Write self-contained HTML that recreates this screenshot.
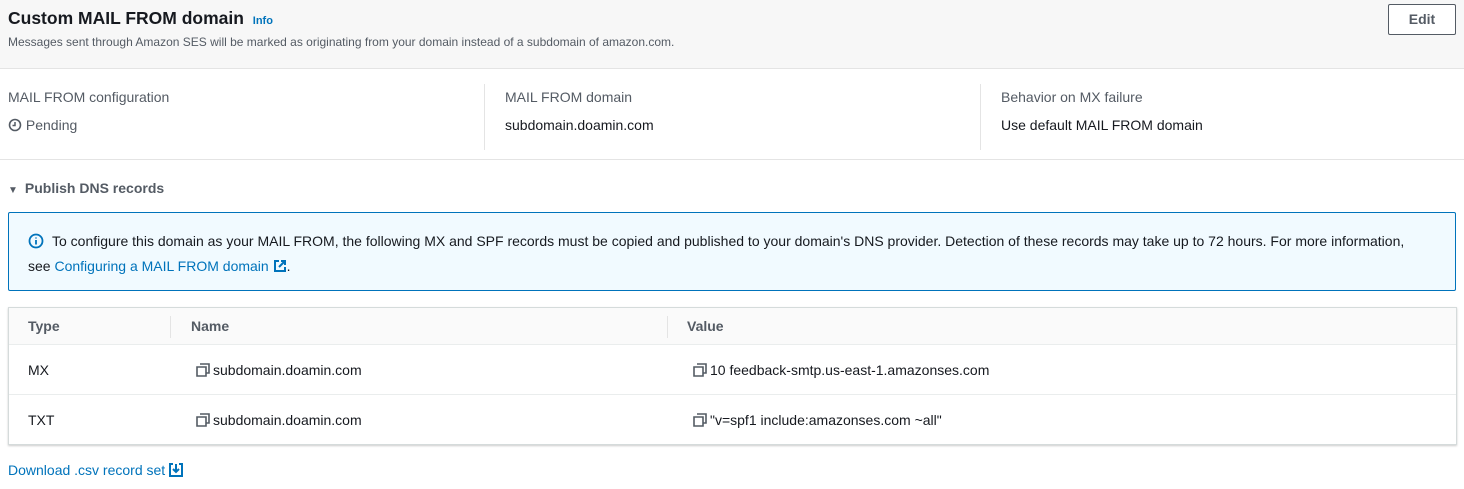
<!DOCTYPE html>
<html><head><style>
*{margin:0;padding:0;box-sizing:border-box}
body{width:1464px;height:489px;background:#fff;font-family:"Liberation Sans",Arial,sans-serif;color:#16191f;position:relative;overflow:hidden;font-size:14px}
.a{position:absolute;white-space:nowrap}
.hdr{position:absolute;left:0;top:0;width:1464px;height:69px;background:#f7f7f7;border-bottom:1px solid #e4e4e4}
.lbl{color:#545b64;font-size:14px}
.link{color:#0073bb}
.vd{position:absolute;width:1px;background:#e4e4e4}
</style></head><body>
<div class="hdr"></div>
<div class="a" style="left:8px;top:8px;font-size:17.5px;font-weight:bold">Custom MAIL FROM domain <span style="color:#0073bb;font-size:11px;margin-left:4px">Info</span></div>
<div class="a" style="left:8px;top:35px;font-size:12px;color:#545b64">Messages sent through Amazon SES will be marked as originating from your domain instead of a subdomain of amazon.com.</div>
<div class="a" style="left:1388px;top:4px;width:68px;height:31px;border:1px solid #545b64;border-radius:2px;background:#fff;font-weight:bold;color:#545b64;text-align:center;line-height:29px;font-size:14px">Edit</div>

<div class="a lbl" style="left:8px;top:89px">MAIL FROM configuration</div>
<div class="a lbl" style="left:8px;top:117px"><svg width="14" height="14" viewBox="0 0 14 14" style="vertical-align:-2px"><circle cx="7" cy="7" r="5.5" fill="none" stroke="#545b64" stroke-width="1.6"/><path d="M7 4v3.5H4.5" fill="none" stroke="#545b64" stroke-width="1.5"/></svg> Pending</div>
<div class="vd" style="left:484px;top:84px;height:66px"></div>
<div class="a lbl" style="left:505px;top:89px">MAIL FROM domain</div>
<div class="a" style="left:505px;top:117px">subdomain.doamin.com</div>
<div class="vd" style="left:980px;top:84px;height:66px"></div>
<div class="a lbl" style="left:1001px;top:89px">Behavior on MX failure</div>
<div class="a" style="left:1001px;top:117px">Use default MAIL FROM domain</div>
<div class="a" style="left:0;top:159px;width:1464px;height:1px;background:#e4e4e4"></div>

<div class="a" style="left:8px;top:180px;font-weight:bold;color:#545b64;font-size:14px"><span style="font-size:10px;margin-right:7px">▼</span>Publish DNS records</div>

<div class="a" style="left:8px;top:212px;width:1448px;height:79px;background:#f1faff;border:1px solid #0073bb;border-radius:2px"></div>
<div class="a" style="left:28px;top:229px;font-size:14px;line-height:25px;white-space:normal;width:1420px"><svg width="16" height="16" viewBox="0 0 16 16" style="vertical-align:-3px;margin-right:8px"><circle cx="8" cy="8" r="6.5" fill="none" stroke="#0073bb" stroke-width="1.8"/><path d="M8 7v4.5M8 4.5v1" stroke="#0073bb" stroke-width="1.8"/></svg>To configure this domain as your MAIL FROM, the following MX and SPF records must be copied and published to your domain's DNS provider. Detection of these records may take up to 72 hours. For more information,<br>see <span class="link">Configuring a MAIL FROM domain <svg width="14" height="14" viewBox="0 0 14 14" style="vertical-align:-2px"><path d="M6 2H2v10h10V8M8 2h4v4M12 2L6 8" fill="none" stroke="#0073bb" stroke-width="2"/></svg></span>.</div>

<div class="a" style="left:8px;top:307px;width:1449px;height:138px;border:1px solid #d5dbdb;box-shadow:0 1px 2px rgba(0,0,0,.2)"></div>
<div class="a" style="left:9px;top:308px;width:1447px;height:37px;background:#fafafa;border-bottom:1px solid #eaeded"></div>
<div class="vd" style="left:170px;top:316px;height:22px"></div>
<div class="vd" style="left:667px;top:316px;height:22px"></div>
<div class="a" style="left:28px;top:318px;font-weight:bold;color:#545b64">Type</div>
<div class="a" style="left:191px;top:318px;font-weight:bold;color:#545b64">Name</div>
<div class="a" style="left:687px;top:318px;font-weight:bold;color:#545b64">Value</div>
<div class="a" style="left:9px;top:394px;width:1447px;height:1px;background:#eaeded"></div>
<div class="a" style="left:28px;top:362px">MX</div>
<div class="a" style="left:28px;top:412px">TXT</div>
<div class="a" style="left:196px;top:362px"><svg width="14" height="14" viewBox="0 0 14 14" style="vertical-align:-2px;margin-right:3px"><path d="M4 1h9v9H10M1 4h9v9H1z" fill="none" stroke="#545b64" stroke-width="1.6"/></svg>subdomain.doamin.com</div>
<div class="a" style="left:196px;top:412px"><svg width="14" height="14" viewBox="0 0 14 14" style="vertical-align:-2px;margin-right:3px"><path d="M4 1h9v9H10M1 4h9v9H1z" fill="none" stroke="#545b64" stroke-width="1.6"/></svg>subdomain.doamin.com</div>
<div class="a" style="left:693px;top:362px"><svg width="14" height="14" viewBox="0 0 14 14" style="vertical-align:-2px;margin-right:3px"><path d="M4 1h9v9H10M1 4h9v9H1z" fill="none" stroke="#545b64" stroke-width="1.6"/></svg>10 feedback-smtp.us-east-1.amazonses.com</div>
<div class="a" style="left:693px;top:412px"><svg width="14" height="14" viewBox="0 0 14 14" style="vertical-align:-2px;margin-right:3px"><path d="M4 1h9v9H10M1 4h9v9H1z" fill="none" stroke="#545b64" stroke-width="1.6"/></svg>"v=spf1 include:amazonses.com ~all"</div>

<div class="a link" style="left:8px;top:462px">Download .csv record set <svg width="14" height="14" viewBox="0 0 14 14" style="vertical-align:-2px"><path d="M4 1H1v12h12V1h-3M7 1v8M4 6l3 3 3-3" fill="none" stroke="#0073bb" stroke-width="2"/></svg></div>
</body></html>
